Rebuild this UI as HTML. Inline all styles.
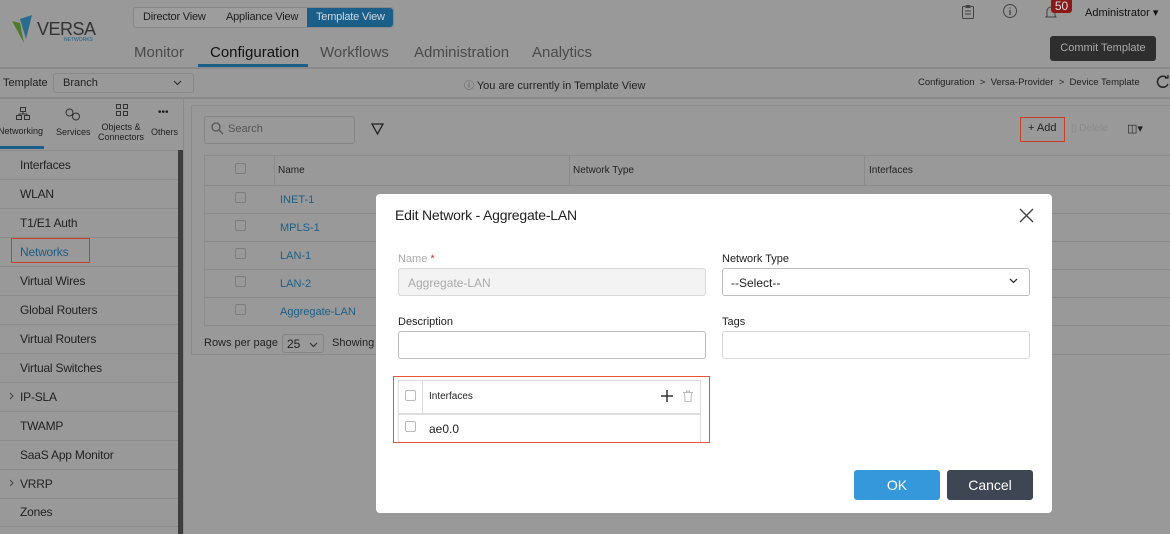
<!DOCTYPE html>
<html><head><meta charset="utf-8"><style>
*{box-sizing:border-box;margin:0;padding:0}
body{width:1170px;height:534px;overflow:hidden;background:#999;font-family:"Liberation Sans",sans-serif;color:#1e1e1e;position:relative;font-size:12px}
.a{position:absolute}
.line{position:absolute;background:#8a8a8a}
.sb{position:absolute;left:20px;font-size:12px;color:#222;letter-spacing:-0.2px}
.sbl{position:absolute;left:0;width:178px;height:1px;background:#8c8c8c}
.cb{position:absolute;width:11px;height:11px;border:1px solid #7d7d7d;border-radius:2px}
.lnk{position:absolute;color:#1d5f88;font-size:11px}
.lbl{position:absolute;font-size:11px;color:#222}
.inp{position:absolute;border:1px solid #bdbdbd;border-radius:3px;background:#fff;height:28px}
</style></head><body>
<!-- header -->
<svg class="a" style="left:12px;top:15px" width="26" height="28" viewBox="0 0 26 28"><path d="M0 6 L12 28 L8 8Z" fill="#4e7a2e"/><path d="M8 4 L20 0 L14 24Z" fill="#2a6b8e"/></svg>
<div class="a" style="left:37px;top:19px;font-size:18px;color:#333;letter-spacing:-0.5px">VERSA</div>
<div class="a" style="left:64px;top:37px;font-size:5px;color:#1d5f88">NETWORKS</div>
<div class="a" style="left:133px;top:7px;width:261px;height:21px;border:1px solid #888;border-radius:3px;background:#9d9d9d"></div>
<div class="a" style="left:143px;top:11px;font-size:11px;letter-spacing:-0.2px">Director View</div>
<div class="a" style="left:226px;top:11px;font-size:11px;letter-spacing:-0.2px">Appliance View</div>
<div class="a" style="left:307px;top:8px;width:86px;height:19px;background:#1a5e8a;border-radius:0 3px 3px 0"></div>
<div class="a" style="left:316px;top:11px;font-size:11px;color:#cfd8df;letter-spacing:-0.2px">Template View</div>
<div class="a" style="left:134px;top:44px;font-size:15px;color:#4a4a4a">Monitor</div>
<div class="a" style="left:210px;top:44px;font-size:15px;color:#111">Configuration</div>
<div class="a" style="left:198px;top:64px;width:110px;height:3px;background:#1a5e8a"></div>
<div class="a" style="left:320px;top:44px;font-size:15px;color:#4a4a4a">Workflows</div>
<div class="a" style="left:414px;top:44px;font-size:15px;color:#4a4a4a">Administration</div>
<div class="a" style="left:532px;top:44px;font-size:15px;color:#4a4a4a">Analytics</div>
<svg class="a" style="left:961px;top:4px" width="14" height="16"><rect x="1.5" y="2.5" width="11" height="12" rx="1" fill="none" stroke="#444"/><rect x="4.5" y="1" width="5" height="3" fill="#444"/><path d="M4 7h6M4 10h6" stroke="#444"/></svg>
<svg class="a" style="left:1002px;top:3px" width="16" height="16"><circle cx="8" cy="8" r="6.5" fill="none" stroke="#444"/><path d="M8 7v5M8 4.5v1" stroke="#444" stroke-width="1.4"/></svg>
<svg class="a" style="left:1044px;top:4px" width="14" height="16"><path d="M3 12V7a4 4 0 018 0v5l1 1H2z" fill="none" stroke="#444"/></svg>
<div class="a" style="left:1051px;top:0;width:21px;height:13px;background:#8a1a1a;border-radius:0 0 3px 3px;color:#ddd;font-size:12px;text-align:center;line-height:12px">50</div>
<div class="a" style="left:1085px;top:6px;font-size:11px;color:#111">Administrator ▾</div>
<div class="a" style="left:1050px;top:36px;width:106px;height:25px;background:#2e2e2e;border-radius:3px;color:#aaa;font-size:11px;text-align:center;line-height:25px">Commit Template</div>
<div class="line" style="left:0;top:67px;width:1170px;height:2px"></div>
<!-- template bar -->
<div class="a" style="left:3px;top:77px;font-size:11px">Template</div>
<div class="a" style="left:53px;top:73px;width:141px;height:20px;border:1px solid #888;border-radius:3px"></div>
<div class="a" style="left:63px;top:77px;font-size:11px;color:#222">Branch</div>
<svg class="a" style="left:173px;top:80px" width="9" height="6"><path d="M1 1l3.5 3.5L8 1" stroke="#333" fill="none" stroke-width="1.2"/></svg>
<div class="a" style="left:464px;top:77px;font-size:11px;color:#222"><span style="color:#555;font-size:10px">ⓘ</span> You are currently in Template View</div>
<div class="a" style="left:918px;top:77px;font-size:9.5px;color:#222">Configuration &nbsp;&gt;&nbsp; Versa-Provider &nbsp;&gt;&nbsp; Device Template</div>
<svg class="a" style="left:1156px;top:75px" width="14" height="14"><path d="M11 3A5.5 5.5 0 1 0 12 9" fill="none" stroke="#222" stroke-width="1.5"/><path d="M9 3h3V0" fill="none" stroke="#222" stroke-width="1.3"/></svg>
<div class="line" style="left:0;top:97px;width:1170px;height:2px"></div>
<!-- sidebar tabs -->
<svg class="a" style="left:16px;top:107px" width="14" height="14" fill="none" stroke="#333"><rect x="4.5" y="0.5" width="5" height="4"/><rect x="0.5" y="8.5" width="5" height="4"/><rect x="8.5" y="8.5" width="5" height="4"/><path d="M7 5v2M3 8V7h8v1"/></svg>
<div class="a" style="left:-2px;top:126px;font-size:9px">Networking</div>
<div class="a" style="left:0;top:146px;width:44px;height:3px;background:#1a5e8a"></div>
<svg class="a" style="left:65px;top:108px" width="16" height="13" fill="none" stroke="#333"><circle cx="4.5" cy="4.5" r="3.5"/><circle cx="11" cy="8.5" r="3.5"/></svg>
<div class="a" style="left:56px;top:127px;font-size:9px">Services</div>
<svg class="a" style="left:116px;top:104px" width="12" height="12" fill="none" stroke="#333"><rect x="0.5" y="0.5" width="4" height="4"/><rect x="7.5" y="0.5" width="4" height="4"/><rect x="0.5" y="7.5" width="4" height="4"/><rect x="7.5" y="7.5" width="4" height="4"/></svg>
<div class="a" style="left:98px;top:122px;font-size:9px;text-align:center;line-height:10px">Objects &amp;<br>Connectors</div>
<div class="a" style="left:158px;top:107px;font-size:10px">•••</div>
<div class="a" style="left:151px;top:127px;font-size:9px">Others</div>
<div class="a" style="left:183px;top:99px;width:1px;height:435px;background:#8a8a8a"></div>
<div class="a" style="left:178px;top:150px;width:5px;height:384px;background:#3e3e3e"></div>
<div class="sbl" style="top:150px"></div>
<div class="sb" style="top:158px">Interfaces</div><div class="sbl" style="top:179px"></div>
<div class="sb" style="top:187px">WLAN</div><div class="sbl" style="top:208px"></div>
<div class="sb" style="top:216px">T1/E1 Auth</div><div class="sbl" style="top:237px"></div>
<div class="a" style="left:11px;top:238px;width:79px;height:25px;border:1.5px solid #c8402a"></div>
<div class="sb" style="top:245px;color:#1d5f88">Networks</div><div class="sbl" style="top:266px"></div>
<div class="sb" style="top:274px">Virtual Wires</div><div class="sbl" style="top:295px"></div>
<div class="sb" style="top:303px">Global Routers</div><div class="sbl" style="top:324px"></div>
<div class="sb" style="top:332px">Virtual Routers</div><div class="sbl" style="top:353px"></div>
<div class="sb" style="top:361px">Virtual Switches</div><div class="sbl" style="top:382px"></div>
<svg class="a" style="left:9px;top:392px" width="5" height="8"><path d="M1 1l3 3-3 3" stroke="#444" fill="none"/></svg>
<div class="sb" style="top:390px">IP-SLA</div><div class="sbl" style="top:411px"></div>
<div class="sb" style="top:419px">TWAMP</div><div class="sbl" style="top:440px"></div>
<div class="sb" style="top:448px">SaaS App Monitor</div><div class="sbl" style="top:469px"></div>
<svg class="a" style="left:9px;top:479px" width="5" height="8"><path d="M1 1l3 3-3 3" stroke="#444" fill="none"/></svg>
<div class="sb" style="top:477px">VRRP</div><div class="sbl" style="top:498px"></div>
<div class="sb" style="top:505px">Zones</div><div class="sbl" style="top:526px"></div>
<!-- main panel -->
<div class="a" style="left:191px;top:105px;width:979px;height:250px;border:1px solid #8c8c8c;border-right:none"></div>
<div class="a" style="left:204px;top:116px;width:151px;height:28px;border:1px solid #858585;border-radius:3px"></div>
<svg class="a" style="left:211px;top:122px" width="13" height="13" fill="none" stroke="#555" stroke-width="1.3"><circle cx="5" cy="5" r="4"/><path d="M8 8l4 4"/></svg>
<div class="a" style="left:228px;top:123px;font-size:11px;color:#555">Search</div>
<svg class="a" style="left:371px;top:123px" width="13" height="12"><path d="M1 1h11L6.5 11z" fill="none" stroke="#222" stroke-width="1.3"/></svg>
<div class="a" style="left:1020px;top:117px;width:45px;height:25px;border:1.5px solid #c8402a"></div>
<div class="a" style="left:1028px;top:122px;font-size:11px;color:#222">+ Add</div>
<div class="a" style="left:1071px;top:123px;font-size:10px;color:#8a8a8a">▯ Delete</div>
<div class="a" style="left:1127px;top:122px;font-size:11px;color:#222">◫▾</div>
<div class="a" style="left:204px;top:155px;width:966px;height:171px;border:1px solid #8c8c8c;border-right:none"></div>
<div class="a" style="left:274px;top:155px;width:1px;height:31px;background:#8c8c8c"></div>
<div class="a" style="left:569px;top:155px;width:1px;height:31px;background:#8c8c8c"></div>
<div class="a" style="left:864px;top:155px;width:1px;height:31px;background:#8c8c8c"></div>
<div class="lbl" style="left:278px;top:165px;font-size:10px">Name</div>
<div class="lbl" style="left:573px;top:165px;font-size:10px">Network Type</div>
<div class="lbl" style="left:869px;top:165px;font-size:10px">Interfaces</div>
<div class="cb" style="left:235px;top:163px"></div>
<div class="line" style="left:204px;top:185px;width:966px;height:1px"></div>
<div class="cb" style="left:235px;top:192px"></div><div class="lnk" style="left:280px;top:194px">INET-1</div>
<div class="line" style="left:204px;top:213px;width:966px;height:1px"></div>
<div class="cb" style="left:235px;top:220px"></div><div class="lnk" style="left:280px;top:222px">MPLS-1</div>
<div class="line" style="left:204px;top:241px;width:966px;height:1px"></div>
<div class="cb" style="left:235px;top:248px"></div><div class="lnk" style="left:280px;top:250px">LAN-1</div>
<div class="line" style="left:204px;top:269px;width:966px;height:1px"></div>
<div class="cb" style="left:235px;top:276px"></div><div class="lnk" style="left:280px;top:278px">LAN-2</div>
<div class="line" style="left:204px;top:297px;width:966px;height:1px"></div>
<div class="cb" style="left:235px;top:304px"></div><div class="lnk" style="left:280px;top:306px">Aggregate-LAN</div>
<div class="lbl" style="left:204px;top:337px;font-size:11px">Rows per page</div>
<div class="a" style="left:282px;top:334px;width:42px;height:19px;border:1px solid #858585;border-radius:3px;font-size:12px;padding:2px 4px">25</div>
<svg class="a" style="left:309px;top:342px" width="9" height="6"><path d="M1 1l3.5 3.5L8 1" stroke="#333" fill="none" stroke-width="1.2"/></svg>
<div class="lbl" style="left:332px;top:337px;font-size:11px">Showing</div>
<!-- modal -->
<div class="a" style="left:376px;top:194px;width:676px;height:319px;background:#fff;border-radius:4px"></div>
<div class="a" style="left:395px;top:207px;font-size:14px;color:#222;letter-spacing:-0.2px">Edit Network - Aggregate-LAN</div>
<svg class="a" style="left:1019px;top:208px" width="15" height="15"><path d="M1 1L14 14M14 1L1 14" stroke="#444" stroke-width="1.4"/></svg>
<div class="lbl" style="left:398px;top:253px;color:#aaa">Name <span style="color:#d33">*</span></div>
<div class="inp" style="left:398px;top:268px;width:308px;background:#f3f3f3;border-color:#d8d8d8"></div>
<div class="a" style="left:408px;top:276px;font-size:12px;color:#aaa">Aggregate-LAN</div>
<div class="lbl" style="left:722px;top:253px">Network Type</div>
<div class="inp" style="left:722px;top:268px;width:308px"></div>
<div class="a" style="left:731px;top:276px;font-size:12px;color:#222">--Select--</div>
<svg class="a" style="left:1009px;top:278px" width="9" height="6"><path d="M1 1l3.5 3.5L8 1" stroke="#333" fill="none" stroke-width="1.3"/></svg>
<div class="lbl" style="left:398px;top:316px">Description</div>
<div class="inp" style="left:398px;top:331px;width:308px"></div>
<div class="lbl" style="left:722px;top:316px">Tags</div>
<div class="inp" style="left:722px;top:331px;width:308px;border-color:#d8d8d8"></div>
<div class="a" style="left:393px;top:376px;width:317px;height:67px;border:1.5px solid #e4553c"></div>
<div class="a" style="left:398px;top:380px;width:303px;height:62px;border:1px solid #ddd;border-bottom:none"></div>
<div class="a" style="left:422px;top:380px;width:1px;height:34px;background:#ddd"></div>
<div class="a" style="left:398px;top:413px;width:303px;height:2px;background:#ddd"></div>
<div class="cb" style="left:405px;top:390px;border-color:#bbb"></div>
<div class="cb" style="left:405px;top:421px;border-color:#bbb"></div>
<div class="lbl" style="left:429px;top:391px;font-size:10px">Interfaces</div>
<svg class="a" style="left:661px;top:390px" width="12" height="12"><path d="M6 0v12M0 6h12" stroke="#333" stroke-width="1.5"/></svg>
<svg class="a" style="left:683px;top:390px" width="10" height="12" fill="none" stroke="#bbb"><path d="M0 2.5h10M3.5 2.5V1h3v1.5M1.5 2.5l.5 9h6l.5-9"/></svg>
<div class="a" style="left:429px;top:422px;font-size:12px;color:#222">ae0.0</div>
<div class="a" style="left:854px;top:470px;width:86px;height:30px;background:#3498db;border-radius:3px;color:#fff;font-size:14px;text-align:center;line-height:30px">OK</div>
<div class="a" style="left:947px;top:470px;width:86px;height:30px;background:#3d4652;border-radius:3px;color:#fff;font-size:14px;text-align:center;line-height:30px">Cancel</div>
</body></html>
